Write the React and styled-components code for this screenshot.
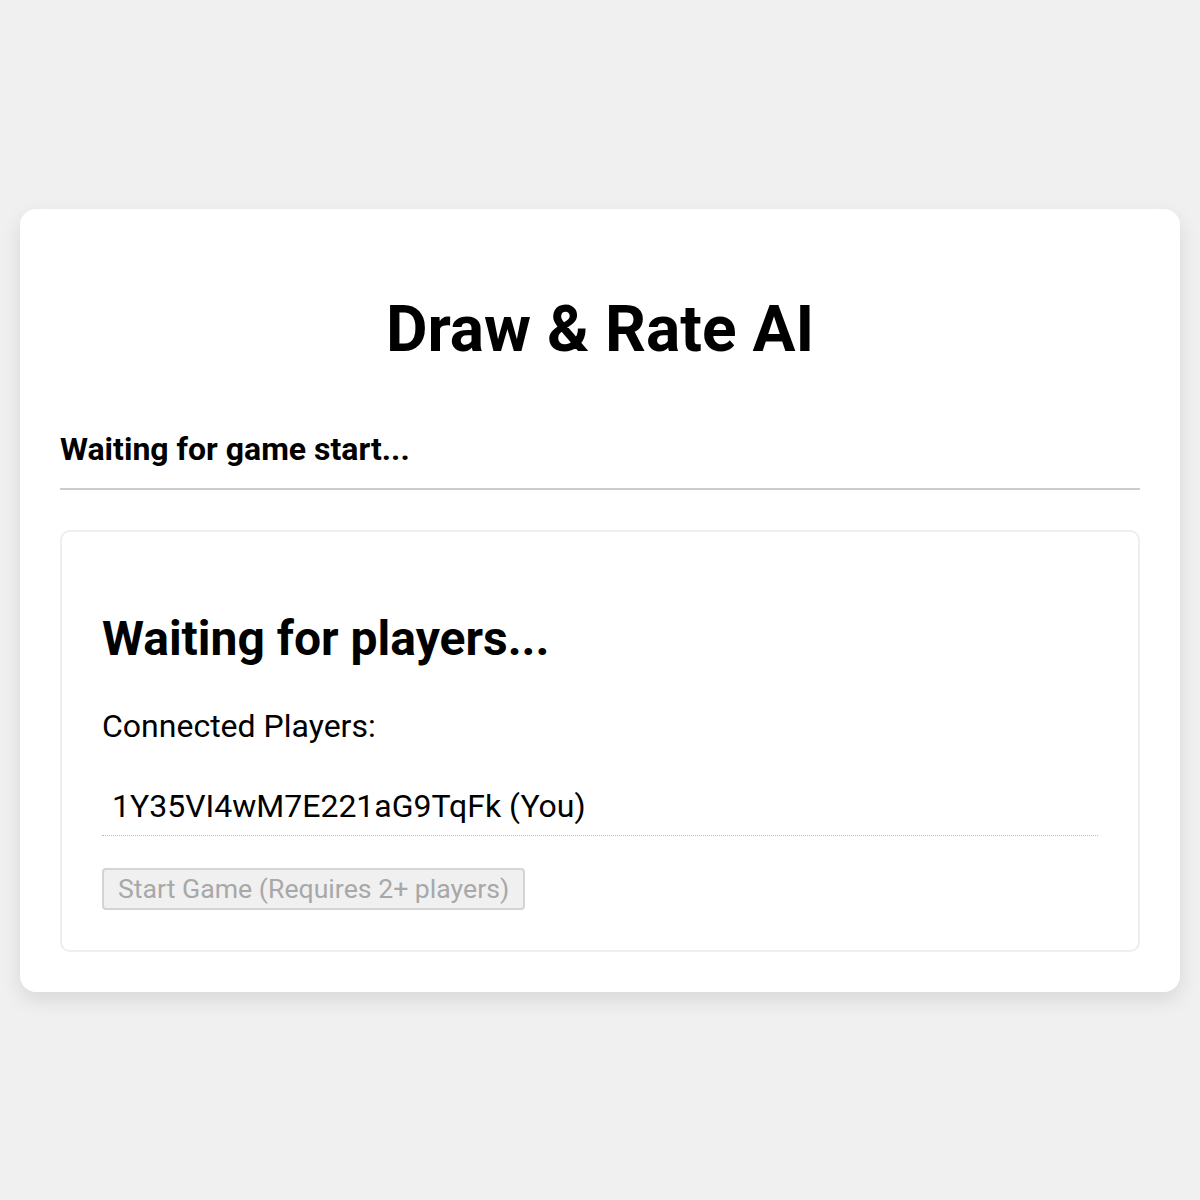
import React from 'react';
import styled, { createGlobalStyle } from 'styled-components';

const GlobalStyle = createGlobalStyle`
    html, body {
        margin: 0;
        padding: 0;
        background: #f0f0f0;
    }
    body {
        font-family: Roboto, "Liberation Sans", Arial, sans-serif;
        font-size: 32px;
        color: #000;
    }
`;

const Page = styled.div`
    min-height: 100vh;
    display: flex;
    align-items: center;
    justify-content: center;
    padding: 0 20px;
    box-sizing: border-box;
`;

const Card = styled.div`
    width: 100%;
    background: #fff;
    border-radius: 16px;
    padding: 40px;
    box-sizing: border-box;
    box-shadow: 0 8px 20px rgba(0, 0, 0, 0.1);
`;

const Title = styled.h1`
    text-align: center;
    font-size: 64px;
    font-weight: 700;
    margin: 43px 0;
`;

const Status = styled.div`
    font-weight: 700;
    padding: 20px 0;
    border-bottom: 2px solid #ccc;
    margin-bottom: 40px;
`;

const Lobby = styled.div`
    border: 2px solid #eee;
    border-radius: 10px;
    padding: 40px;
`;

const LobbyTitle = styled.h2`
    font-size: 48px;
    font-weight: 700;
    margin: 38px 0 40px;
`;

const Label = styled.p`
    margin: 32px 0;
`;

const PlayerList = styled.ul`
    list-style: none;
    margin: 32px 0;
    padding: 0;
`;

const Player = styled.li`
    padding: 10px;
    border-bottom: 1px dotted #bbb;
`;

const StartButton = styled.button`
    font-family: inherit;
    font-size: 26.67px;
    padding: 3px 14px;
    border: 2px solid #d4d4d4;
    border-radius: 4px;
    background: #f0f0f0;
    color: #a8a8a8;
`;

const players = [{ id: '1Y35VI4wM7E221aG9TqFk', me: true }];

export default function App() {
    return (
        <>
            <GlobalStyle />
            <Page>
                <Card>
                    <Title>Draw &amp; Rate AI</Title>
                    <Status>Waiting for game start...</Status>
                    <Lobby>
                        <LobbyTitle>Waiting for players...</LobbyTitle>
                        <Label>Connected Players:</Label>
                        <PlayerList>
                            {players.map(p => (
                                <Player key={p.id}>
                                    {p.id}{p.me ? ' (You)' : ''}
                                </Player>
                            ))}
                        </PlayerList>
                        <StartButton disabled={players.length < 2}>
                            Start Game (Requires 2+ players)
                        </StartButton>
                    </Lobby>
                </Card>
            </Page>
        </>
    );
}
